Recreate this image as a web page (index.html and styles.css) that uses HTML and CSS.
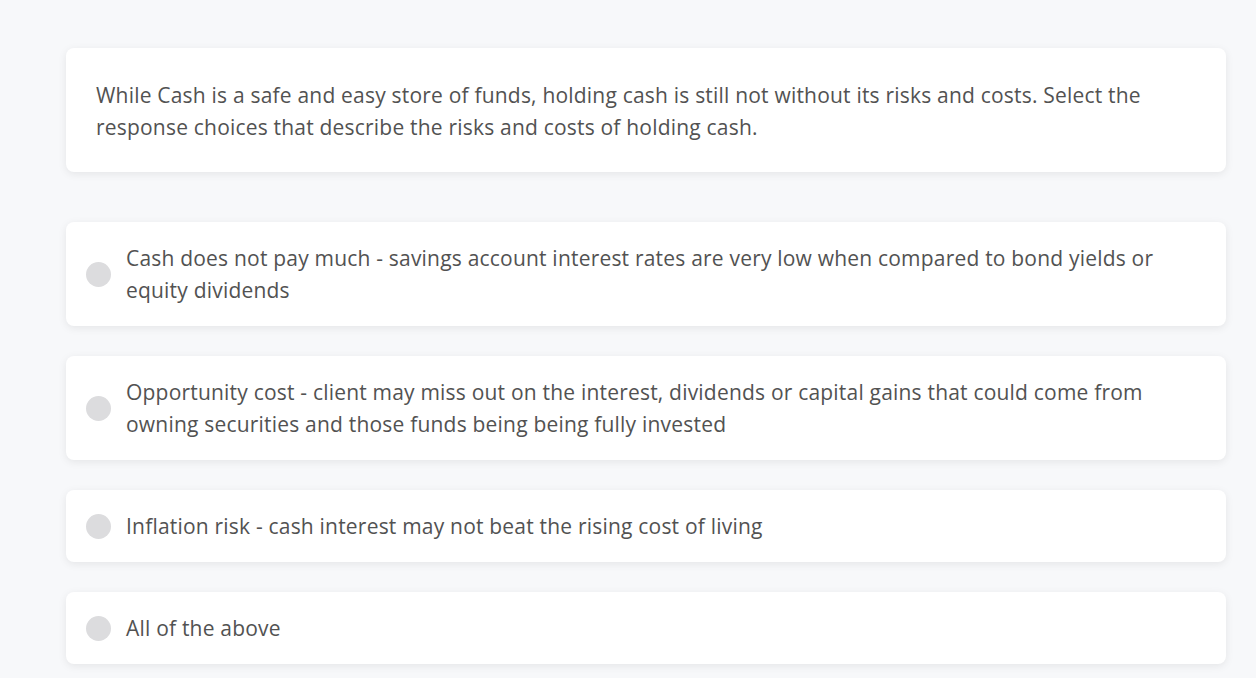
FILE: index.html
```html
<!DOCTYPE html>
<html lang="en">
<head>
    <meta charset="UTF-8">
    <meta name="viewport" content="width=device-width, initial-scale=1.0">
    <title>Question</title>
    <link rel="stylesheet" href="styles.css">
</head>
<body>
    <main class="quiz">
        <div class="question">
            <p>While Cash is a safe and easy store of funds, holding cash is still not without its risks and costs. Select the response choices that describe the risks and costs of holding cash.</p>
        </div>

        <div class="choices">
            <label class="choice">
                <span class="radio"></span>
                <span class="choice-text">Cash does not pay much - savings account interest rates are very low when compared to bond yields or equity dividends</span>
            </label>
            <label class="choice">
                <span class="radio"></span>
                <span class="choice-text">Opportunity cost - client may miss out on the interest, dividends or capital gains that could come from owning securities and those funds being being fully invested</span>
            </label>
            <label class="choice">
                <span class="radio"></span>
                <span class="choice-text">Inflation risk - cash interest may not beat the rising cost of living</span>
            </label>
            <label class="choice">
                <span class="radio"></span>
                <span class="choice-text">All of the above</span>
            </label>
        </div>
    </main>
</body>
</html>
```

FILE: styles.css
```css
body {
    font-family: 'Open Sans', sans-serif;
    background-color: #f7f8fa;
    color: #525252;
    margin: 0;
    padding: 0;
}
.quiz {
    padding: 48px 30px 20px 66px;
}
.question {
    background-color: white;
    border-radius: 8px;
    box-shadow: 0 2px 8px rgba(0,0,0,0.08);
    padding: 31px 30px 29px 30px;
}
.question p {
    margin: 0;
    font-size: 21px;
    letter-spacing: 0.2px;
    line-height: 32px;
}
.choices {
    display: flex;
    flex-direction: column;
    gap: 30px;
    margin-top: 50px;
}
.choice {
    display: flex;
    align-items: center;
    gap: 15px;
    background-color: white;
    border-radius: 8px;
    box-shadow: 0 2px 8px rgba(0,0,0,0.08);
    padding: 20px 20px;
    cursor: pointer;
}
.radio {
    flex: none;
    width: 25px;
    height: 25px;
    border-radius: 50%;
    background-color: #dcdcde;
}
.choice-text {
    font-size: 21px;
    letter-spacing: 0.2px;
    line-height: 32px;
}
```
